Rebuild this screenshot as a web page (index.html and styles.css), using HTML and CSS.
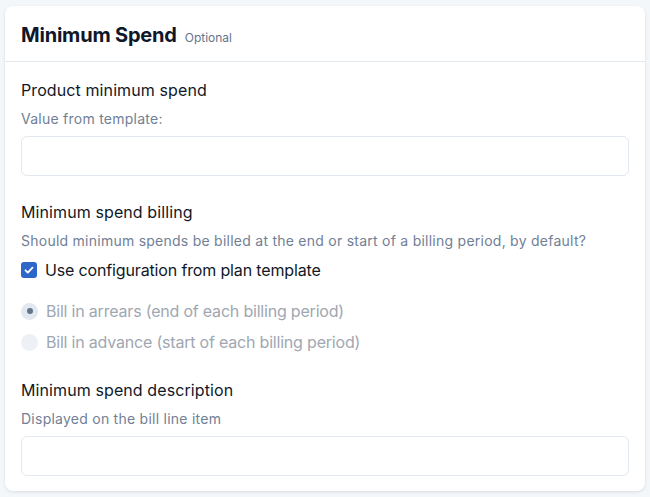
FILE: index.html
```html
<!DOCTYPE html>
<html lang="en">
<head>
    <meta charset="UTF-8">
    <meta name="viewport" content="width=device-width, initial-scale=1.0">
    <title>Minimum Spend</title>
    <link rel="stylesheet" href="styles.css">
</head>
<body>
    <div class="card">
        <div class="card-header">
            <h2>Minimum Spend</h2>
            <span class="optional">Optional</span>
        </div>

        <div class="card-body">
            <div class="field">
                <label class="field-label">Product minimum spend</label>
                <div class="field-help">Value from template:</div>
                <input type="text" class="text-input">
            </div>

            <div class="field">
                <label class="field-label">Minimum spend billing</label>
                <div class="field-help">Should minimum spends be billed at the end or start of a billing period, by default?</div>
                <label class="check-row">
                    <span class="checkbox">
                        <svg width="12" height="12" viewBox="0 0 12 12"><path d="M2.5 6.3l2.3 2.3 4.7-5" fill="none" stroke="#fff" stroke-width="1.8" stroke-linecap="round" stroke-linejoin="round"/></svg>
                    </span>
                    Use configuration from plan template
                </label>
                <div class="radio-group">
                    <div class="radio-row">
                        <span class="radio selected"></span>
                        Bill in arrears (end of each billing period)
                    </div>
                    <div class="radio-row">
                        <span class="radio"></span>
                        Bill in advance (start of each billing period)
                    </div>
                </div>
            </div>

            <div class="field">
                <label class="field-label">Minimum spend description</label>
                <div class="field-help">Displayed on the bill line item</div>
                <input type="text" class="text-input">
            </div>
        </div>
    </div>
</body>
</html>
```

FILE: styles.css
```css
body {
    font-family: Inter, 'Noto Sans', sans-serif;
    margin: 0;
    padding: 6px 5px 5px;
    background-color: #f4f7fa;
    color: #111827;
}

.card {
    background-color: white;
    border-radius: 8px;
    box-shadow: 0 1px 3px rgba(15, 23, 42, 0.12);
}

.card-header {
    display: flex;
    align-items: baseline;
    gap: 8px;
    height: 56px;
    padding: 17px 16px 0;
    border-bottom: 1px solid #e2e8f0;
    box-sizing: border-box;
}

.card-header h2 {
    margin: 0;
    font-size: 20px;
    line-height: 24px;
    font-weight: 700;
    color: #0f172a;
    letter-spacing: -0.2px;
}

.optional {
    font-size: 12px;
    color: #64748b;
}

.card-body {
    padding: 16px 16px 15px;
    display: flex;
    flex-direction: column;
    gap: 24px;
}

.field {
    display: flex;
    flex-direction: column;
}

.field-label {
    font-size: 16px;
    font-weight: 400;
    line-height: 24px;
    margin-bottom: 7px;
    color: #111827;
    letter-spacing: 0.1px;
}

.field-help {
    font-size: 14px;
    line-height: 20px;
    color: #718096;
    margin-bottom: 7px;
    letter-spacing: 0.25px;
}

.text-input {
    height: 40px;
    box-sizing: border-box;
    border: 1px solid #e2e8f0;
    border-radius: 6px;
    padding: 0 12px;
    font-size: 15px;
    font-family: inherit;
}

.check-row {
    display: flex;
    align-items: center;
    gap: 8px;
    font-size: 16px;
    line-height: 24px;
    letter-spacing: -0.15px;
}

.checkbox {
    width: 16px;
    height: 16px;
    border-radius: 3px;
    background-color: #2c67c9;
    display: flex;
    align-items: center;
    justify-content: center;
}

.radio-group {
    display: flex;
    flex-direction: column;
    gap: 7px;
    margin-top: 17px;
}

.radio-row {
    display: flex;
    align-items: center;
    gap: 8px;
    font-size: 16px;
    line-height: 24px;
    letter-spacing: -0.2px;
    color: #a0a7b2;
}

.radio {
    width: 17px;
    height: 17px;
    border-radius: 50%;
    background-color: #edf1f6;
    display: flex;
    align-items: center;
    justify-content: center;
}

.radio.selected {
    background-color: #e2e8f0;
}

.radio.selected::after {
    content: '';
    width: 6px;
    height: 6px;
    border-radius: 50%;
    background-color: #64748b;
}
```
